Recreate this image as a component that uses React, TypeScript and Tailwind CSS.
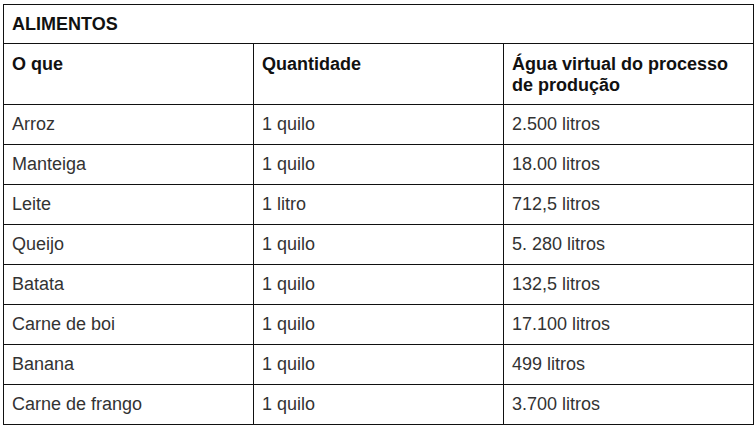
import React from 'react'

const rows: [string, string, string][] = [
  ['Arroz', '1 quilo', '2.500 litros'],
  ['Manteiga', '1 quilo', '18.00 litros'],
  ['Leite', '1 litro', '712,5 litros'],
  ['Queijo', '1 quilo', '5. 280 litros'],
  ['Batata', '1 quilo', '132,5 litros'],
  ['Carne de boi', '1 quilo', '17.100 litros'],
  ['Banana', '1 quilo', '499 litros'],
  ['Carne de frango', '1 quilo', '3.700 litros'],
]

const App = () => {
  return (
    <div
      className="w-[756px] h-[426px] bg-white pl-[3px] pt-[4px]"
      style={{ fontFamily: '"Liberation Sans", Arial, sans-serif' }}
    >
      <table className="w-[750px] border-collapse table-fixed text-[18px] leading-[21px]">
        <colgroup>
          <col className="w-[250px]" />
          <col className="w-[250px]" />
          <col className="w-[250px]" />
        </colgroup>
        <thead>
          <tr className="h-[39px]">
            <th
              colSpan={3}
              className="border border-[#111] px-[8px] text-left align-middle font-bold text-[#111]"
            >
              ALIMENTOS
            </th>
          </tr>
          <tr className="h-[61px]">
            <th className="border border-[#111] px-[8px] pt-[10px] text-left align-top font-bold text-[#111]">
              O que
            </th>
            <th className="border border-[#111] px-[8px] pt-[10px] text-left align-top font-bold text-[#111]">
              Quantidade
            </th>
            <th className="border border-[#111] px-[8px] pt-[10px] text-left align-top font-bold text-[#111]">
              Água virtual do processo de produção
            </th>
          </tr>
        </thead>
        <tbody>
          {rows.map(([food, qty, water]) => (
            <tr key={food} className="h-[40px]">
              <td className="border border-[#111] px-[8px] align-middle text-[#333]">{food}</td>
              <td className="border border-[#111] px-[8px] align-middle text-[#333]">{qty}</td>
              <td className="border border-[#111] px-[8px] align-middle text-[#333]">{water}</td>
            </tr>
          ))}
        </tbody>
      </table>
    </div>
  )
}

export default App
